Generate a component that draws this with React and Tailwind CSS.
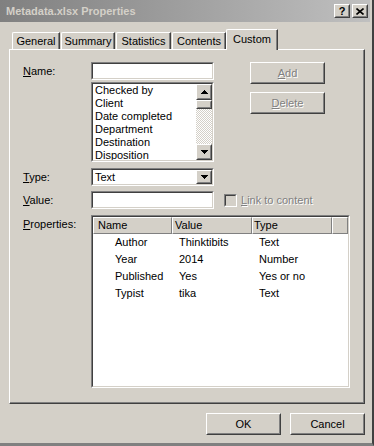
import React from 'react';

function Sunken({ className = '', inner = '', children }) {
    return (
        <div className={`border border-t-[#808080] border-l-[#808080] border-r-white border-b-white ${className}`}>
            <div className={`h-full border border-t-[#404040] border-l-[#404040] border-r-[#d4d0c8] border-b-[#d4d0c8] ${inner}`}>
                {children}
            </div>
        </div>
    );
}

function Raised({ className = '', inner = '', children }) {
    return (
        <div className={`border border-t-white border-l-white border-r-[#404040] border-b-[#404040] bg-[#d4d0c8] ${className}`}>
            <div className={`h-full border border-t-[#d4d0c8] border-l-[#d4d0c8] border-r-[#808080] border-b-[#808080] ${inner}`}>
                {children}
            </div>
        </div>
    );
}

function Arrow({ up = false }) {
    return (
        <svg width="7" height="4" viewBox="0 0 7 4" shapeRendering="crispEdges">
            {up
                ? <path d="M3 0h1v1h1v1h1v1h1v1H0V3h1V2h1V1h1z" fill="#000" />
                : <path d="M0 0h7v1H6v1H5v1H4v1H3V3H2V2H1V1H0z" fill="#000" />}
        </svg>
    );
}

const disabledText = 'text-[#808080] [text-shadow:1px_1px_0_#ffffff]';

const names = ['Checked by', 'Client', 'Date completed', 'Department', 'Destination', 'Disposition'];

const props = [
    { name: 'Author', value: 'Thinktibits', type: 'Text' },
    { name: 'Year', value: '2014', type: 'Number' },
    { name: 'Published', value: 'Yes', type: 'Yes or no' },
    { name: 'Typist', value: 'tika', type: 'Text' },
];

const tabs = [
    { label: 'General', w: 'w-[48px] ml-[3px]' },
    { label: 'Summary', w: 'w-[54px] ml-[1px]' },
    { label: 'Statistics', w: 'w-[55px] ml-[1px]' },
    { label: 'Contents', w: 'w-[54px] ml-[1px]' },
];

export default function App() {
    return (
        <div className="w-[374px] h-[446px] bg-[#d4d0c8] border-r-2 border-r-[#404040] border-b-[3px] border-b-[#808080] font-['Liberation_Sans',Arial,sans-serif] text-[11px] leading-[13px] text-black flex flex-col overflow-hidden select-none">
            {/* Title bar */}
            <div className="h-[22px] mr-[2px] flex items-center justify-between bg-linear-to-r from-[#808080] to-[#c0c0c0] pl-[6px] pr-[2px]">
                <span className="font-bold text-[#d4d0c8]">Metadata.xlsx Properties</span>
                <div className="flex gap-[2px]">
                    <Raised className="w-[16px] h-[14px]" inner="flex items-center justify-center">
                        <span className="font-bold text-[11px] leading-[10px]">?</span>
                    </Raised>
                    <Raised className="w-[16px] h-[14px]" inner="flex items-center justify-center">
                        <svg width="8" height="7" viewBox="0 0 8 7">
                            <path d="M0.5 0.5L7.5 6.5M7.5 0.5L0.5 6.5" stroke="#000" strokeWidth="1.6" />
                        </svg>
                    </Raised>
                </div>
            </div>

            <div className="pl-[9px] mt-[7px]">
                {/* Tabs */}
                <div className="h-[20px] flex items-end">
                    {tabs.map(t => (
                        <div key={t.label} className={`${t.w} h-[17px] flex items-center justify-center pt-[1px] border-t border-l border-t-white border-l-white border-r border-r-[#404040] rounded-tl-[2px] shadow-[inset_-1px_0_0_#808080]`}>
                            {t.label}
                        </div>
                    ))}
                    <div className="w-[52px] h-[21px] -mb-px relative z-10 bg-[#d4d0c8] flex items-start justify-center pt-[3px] border-t border-l border-t-white border-l-white border-r border-r-[#404040] rounded-tl-[2px] shadow-[inset_-1px_0_0_#808080]">
                        Custom
                    </div>
                </div>

                {/* Panel */}
                <div className="w-[356px] h-[355px] border border-t-white border-l-white border-r-[#404040] border-b-[#404040] shadow-[inset_-1px_-1px_0_#808080] pt-[12px] pl-[13px]">
                    <div className="flex">
                        <div className="flex flex-col">
                            <div className="flex items-center h-[18px]">
                                <span className="w-[68px]"><u>N</u>ame:</span>
                                <Sunken className="w-[123px] h-[18px]" inner="bg-white" />
                            </div>
                            <div className="flex mt-[2px]">
                                <div className="w-[68px]" />
                                <Sunken className="w-[123px] h-[80px]" inner="bg-white flex overflow-hidden">
                                    <div className="flex-1 flex flex-col">
                                        {names.map(n => (
                                            <div key={n} className="h-[13px] shrink-0 pl-[2px] whitespace-nowrap">{n}</div>
                                        ))}
                                    </div>
                                    <div className="w-[16px] flex flex-col">
                                        <Raised className="h-[16px] shrink-0" inner="flex items-center justify-center">
                                            <Arrow up />
                                        </Raised>
                                        <Raised className="h-[9px] shrink-0" />
                                        <div className="flex-1 [background-image:repeating-conic-gradient(#d4d0c8_0_25%,#ffffff_0_50%)] [background-size:2px_2px]" />
                                        <Raised className="h-[16px] shrink-0" inner="flex items-center justify-center">
                                            <Arrow />
                                        </Raised>
                                    </div>
                                </Sunken>
                            </div>
                        </div>
                        <div className="ml-[36px] flex flex-col gap-[8px]">
                            <Raised className="w-[75px] h-[22px]" inner="flex items-center justify-center">
                                <span className={disabledText}><u>A</u>dd</span>
                            </Raised>
                            <Raised className="w-[75px] h-[22px]" inner="flex items-center justify-center">
                                <span className={disabledText}><u>D</u>elete</span>
                            </Raised>
                        </div>
                    </div>

                    {/* Type */}
                    <div className="flex items-center h-[18px] mt-[6px]">
                        <span className="w-[68px]"><u>T</u>ype:</span>
                        <Sunken className="w-[123px] h-[18px]" inner="bg-white flex">
                            <span className="flex-1 pl-[2px] leading-[14px]">Text</span>
                            <Raised className="w-[16px] h-full" inner="flex items-center justify-center">
                                <Arrow />
                            </Raised>
                        </Sunken>
                    </div>

                    {/* Value */}
                    <div className="flex items-center h-[18px] mt-[5px]">
                        <span className="w-[68px]"><u>V</u>alue:</span>
                        <Sunken className="w-[123px] h-[18px]" inner="bg-white" />
                        <Sunken className="w-[13px] h-[13px] ml-[10px]" inner="bg-[#d4d0c8]" />
                        <span className={`ml-[4px] ${disabledText}`}><u>L</u>ink to content</span>
                    </div>

                    {/* Properties */}
                    <div className="flex items-start mt-[6px]">
                        <span className="w-[68px] pt-[3px]"><u>P</u>roperties:</span>
                        <Sunken className="w-[259px] h-[173px]" inner="bg-white flex flex-col overflow-hidden">
                            <div className="h-[17px] flex shrink-0">
                                <div className="w-[79px] border border-t-white border-l-white border-r-[#808080] border-b-[#808080] bg-[#d4d0c8] pl-[4px] flex items-center">Name</div>
                                <div className="w-[80px] border border-t-white border-l-white border-r-[#808080] border-b-[#808080] bg-[#d4d0c8] pl-[2px] flex items-center">Value</div>
                                <div className="w-[80px] border border-t-white border-l-white border-r-[#808080] border-b-[#808080] bg-[#d4d0c8] pl-[1px] flex items-center">Type</div>
                                <div className="flex-1 border border-t-white border-l-white border-r-[#808080] border-b-[#808080] bg-[#d4d0c8]" />
                            </div>
                            {props.map(p => (
                                <div key={p.name} className="h-[17px] flex items-center shrink-0">
                                    <span className="w-[79px] pl-[22px]">{p.name}</span>
                                    <span className="w-[80px] pl-[7px]">{p.value}</span>
                                    <span className="w-[80px] pl-[7px]">{p.type}</span>
                                </div>
                            ))}
                        </Sunken>
                    </div>
                </div>

                {/* Dialog buttons */}
                <div className="w-[356px] flex justify-end gap-[9px] mt-[9px]">
                    <Raised className="w-[75px] h-[22px]" inner="flex items-center justify-center">OK</Raised>
                    <Raised className="w-[75px] h-[22px]" inner="flex items-center justify-center">Cancel</Raised>
                </div>
            </div>
        </div>
    );
}
